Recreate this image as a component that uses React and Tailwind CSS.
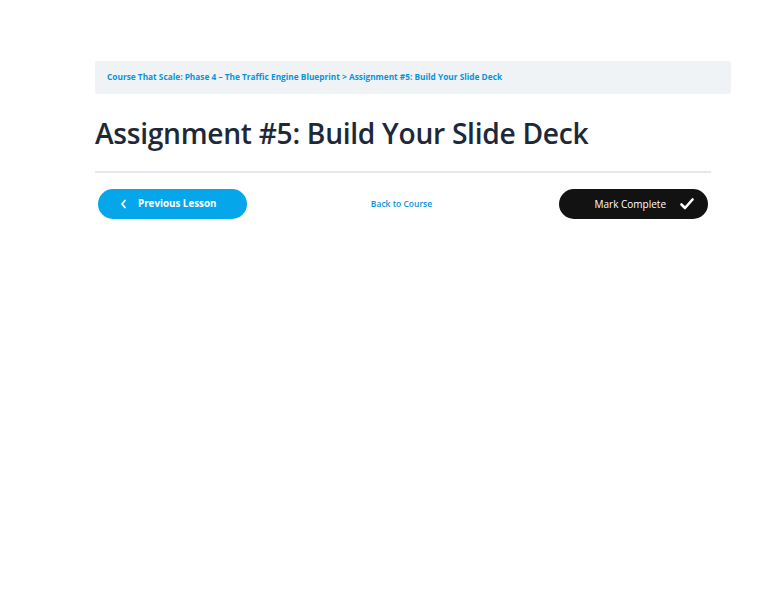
import React from 'react';

const Check = () => (
    <svg width="14" height="12" viewBox="0 0 14 12" fill="none">
        <path d="M1.5 6.5 L5 10 L12.5 1.5" stroke="white" strokeWidth="2.6" strokeLinecap="round" strokeLinejoin="round" />
    </svg>
);

const Chevron = () => (
    <svg width="7" height="10" viewBox="0 0 7 10" fill="none">
        <path d="M5 1.5 L2 5 L5 8.5" stroke="white" strokeWidth="1.8" strokeLinecap="round" strokeLinejoin="round" />
    </svg>
);

const App = () => {
    return (
        <div className="min-h-[599px] bg-white pt-[61px] pl-[95px]" style={{ fontFamily: '"Open Sans", "Noto Sans", sans-serif' }}>
            <div className="w-[616px]">
                <div className="w-[636px] h-[33px] bg-[#f0f3f6] rounded-[2px] flex items-center pl-[12px]">
                    <span className="text-[8.3px] font-bold text-[#0a93dc]">
                        Course That Scale: Phase 4 – The Traffic Engine Blueprint &gt; Assignment #5: Build Your Slide Deck
                    </span>
                </div>
                <h1 className="mt-[19px] text-[28.2px] leading-[40px] font-semibold text-[#1d2939] tracking-[-0.3px]">
                    Assignment #5: Build Your Slide Deck
                </h1>
                <div className="mt-[18px] h-[2px] bg-[#e3e8ef]" />
                <div className="mt-[16px] px-[3px] flex items-center justify-between">
                    <button className="w-[149px] h-[30px] rounded-full bg-[#05a6ea] flex items-center pl-[22px] gap-[11px] text-white text-[9.8px] font-bold">
                        <Chevron />
                        <span>Previous Lesson</span>
                    </button>
                    <a className="text-[8.5px] font-semibold text-[#0a93dc] mr-[3px]">Back to Course</a>
                    <button className="w-[149px] h-[30px] rounded-full bg-[#121212] flex items-center justify-end pr-[14px] gap-[14px] text-white text-[10px]">
                        <span>Mark Complete</span>
                        <Check />
                    </button>
                </div>
            </div>
        </div>
    );
};

export default App;
